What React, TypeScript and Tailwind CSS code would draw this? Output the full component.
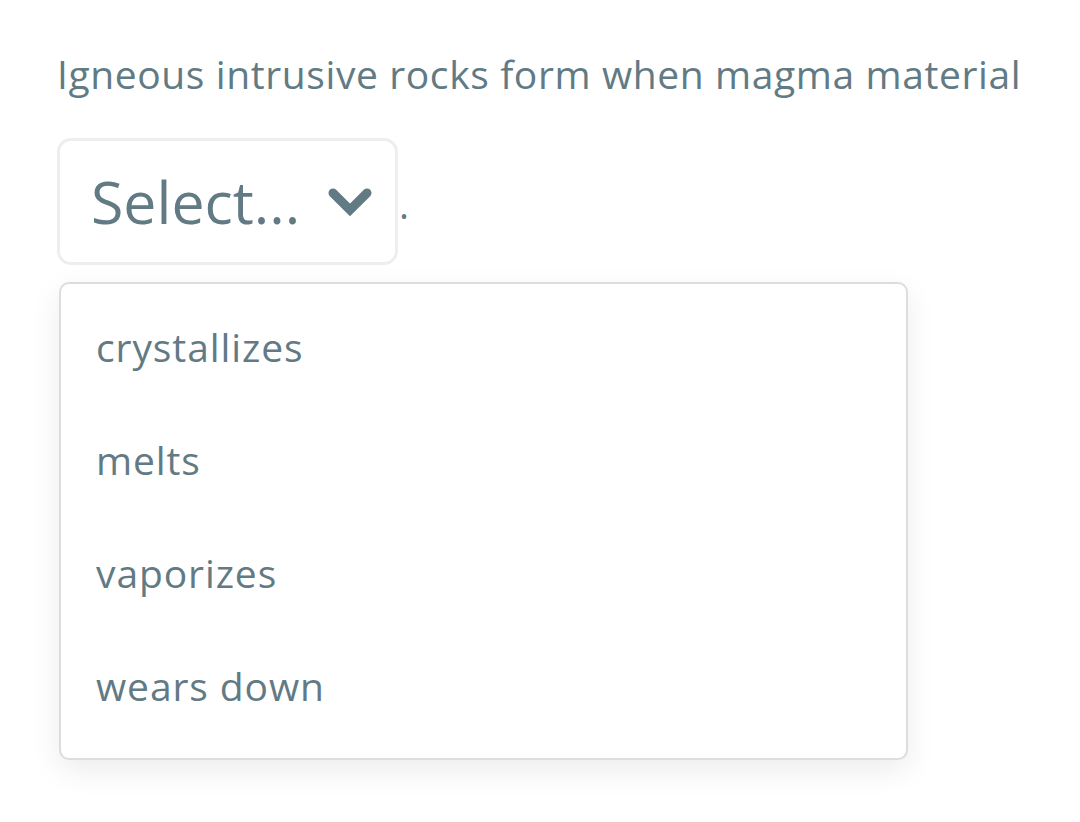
import React, { useState } from 'react';

const options = ['crystallizes', 'melts', 'vaporizes', 'wears down'];

const Chevron = () => (
    <svg width="46" height="32" viewBox="0 0 46 32" className="shrink-0">
        <path d="M6 7 L23 24 L40 7" fill="none" stroke="#627a84" strokeWidth="9" strokeLinecap="round" strokeLinejoin="miter" />
    </svg>
);

const App = () => {
    const [open] = useState(true);

    return (
        <div className="w-[1080px] h-[822px] bg-white text-[#627a84] pl-[57px] pt-[46px]" style={{ fontFamily: '"Open Sans", "Noto Sans", sans-serif' }}>
            <p className="text-[39px] leading-[56px] tracking-[0.6px]">Igneous intrusive rocks form when magma material</p>
            <div className="flex items-end mt-[36px]">
                <button className="flex items-center gap-[27px] h-[127px] w-[341px] pl-[31px] pr-[18px] border-[3px] border-[#eeeeee] rounded-[14px] bg-white">
                    <span className="text-[59px] leading-none">Select...</span>
                    <Chevron />
                </button>
                <span className="text-[38px] leading-none mb-[42px] ml-[1px]">.</span>
            </div>
            {open && (
                <ul className="mt-[17px] w-[849px] ml-[2px] pt-[7px] pb-[15px] bg-white border-2 border-[#dddddd] rounded-[10px] shadow-[0_10px_30px_rgba(0,0,0,0.08)]">
                    {options.map(o => (
                        <li key={o} className="h-[113px] flex items-center px-[35px] text-[39px] tracking-[0.9px]">{o}</li>
                    ))}
                </ul>
            )}
        </div>
    );
};

export default App;
